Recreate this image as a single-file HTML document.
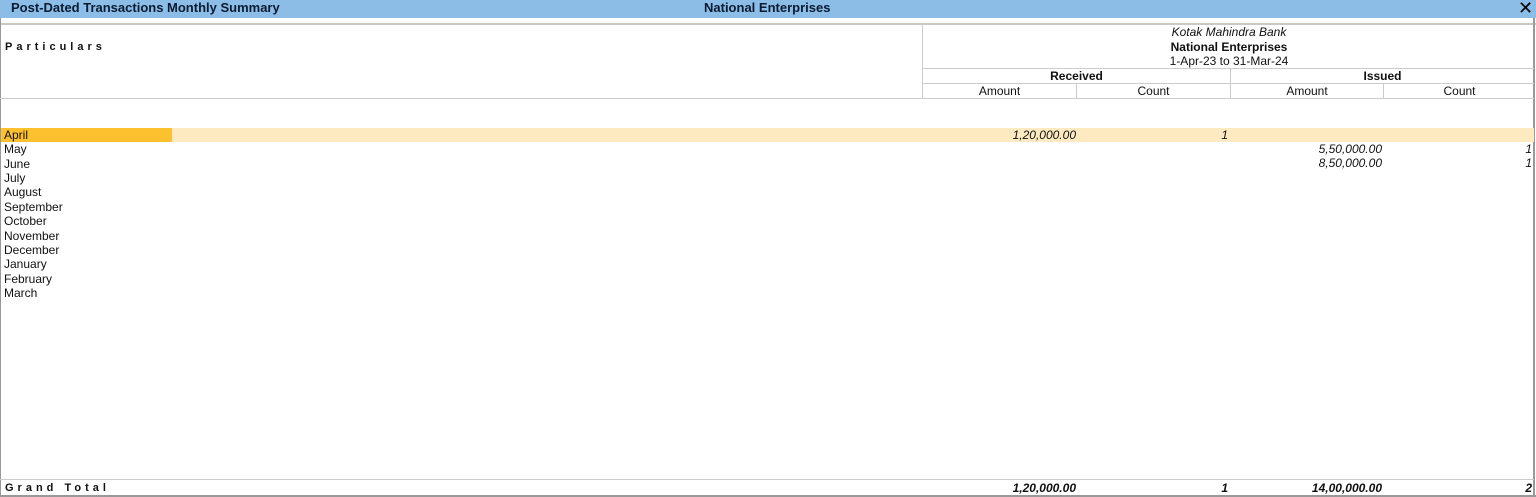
<!DOCTYPE html>
<html><head><style>
body{margin:0;width:1536px;height:497px;overflow:hidden;background:#fff;font-family:"Liberation Sans",Arial,sans-serif;font-size:12px;color:#111;position:relative}
div{position:absolute}
.t{white-space:nowrap;line-height:14px}
.r{text-align:right;font-style:italic}
</style></head><body>
<div style="left:0;top:0;width:1536px;height:18px;background:#8bbde6"></div>
<div class="t" style="left:11px;top:1px;font-weight:bold;font-size:13px;color:#0a1a33">Post-Dated Transactions Monthly Summary</div>
<div class="t" style="left:704px;top:1px;font-weight:bold;font-size:13px;color:#0a1a33">National Enterprises</div>
<div class="t" style="left:1518px;top:0px;font-size:18px;line-height:16px;color:#000">✕</div>
<div style="left:0;top:23px;width:1536px;height:2px;background:#c8c8c8"></div>
<div style="left:0;top:18px;width:1px;height:479px;background:#999"></div>
<div style="left:1533px;top:18px;width:2px;height:479px;background:#999"></div>
<div class="t" style="left:5px;top:40px;font-weight:bold;font-size:11px;letter-spacing:4px">Particulars</div>
<div style="left:922px;top:25px;width:1px;height:74px;background:#ccc"></div>
<div class="t" style="left:923px;top:25px;width:612px;text-align:center;font-style:italic">Kotak Mahindra Bank</div>
<div class="t" style="left:923px;top:40px;width:612px;text-align:center;font-weight:bold">National Enterprises</div>
<div class="t" style="left:923px;top:54px;width:612px;text-align:center">1-Apr-23 to 31-Mar-24</div>
<div style="left:922px;top:68px;width:612px;height:1px;background:#ccc"></div>
<div class="t" style="left:923px;top:69px;width:307px;text-align:center;font-weight:bold">Received</div>
<div class="t" style="left:1230px;top:69px;width:305px;text-align:center;font-weight:bold">Issued</div>
<div style="left:922px;top:83px;width:612px;height:1px;background:#ccc"></div>
<div style="left:1076px;top:83px;width:1px;height:15px;background:#ccc"></div>
<div style="left:1230px;top:69px;width:1px;height:29px;background:#ccc"></div>
<div style="left:1383px;top:83px;width:1px;height:15px;background:#ccc"></div>
<div class="t" style="left:923px;top:84px;width:153px;text-align:center">Amount</div>
<div class="t" style="left:1077px;top:84px;width:153px;text-align:center">Count</div>
<div class="t" style="left:1231px;top:84px;width:152px;text-align:center">Amount</div>
<div class="t" style="left:1384px;top:84px;width:151px;text-align:center">Count</div>
<div style="left:0;top:98px;width:1534px;height:1px;background:#ccc"></div>
<div style="left:1px;top:128px;width:1533px;height:14px;background:#fdeac0"></div>
<div style="left:1px;top:128px;width:171px;height:14px;background:#fdc12f"></div>
<div class="t" style="left:4px;top:128px;line-height:14.36px">April<br>May<br>June<br>July<br>August<br>September<br>October<br>November<br>December<br>January<br>February<br>March</div>
<div class="t r" style="left:900px;top:128px;width:176px">1,20,000.00</div>
<div class="t r" style="left:1100px;top:128px;width:128px">1</div>
<div class="t r" style="left:1200px;top:142px;width:182px;line-height:14.36px">5,50,000.00<br>8,50,000.00</div>
<div class="t r" style="left:1400px;top:142px;width:132px;line-height:14.36px">1<br>1</div>
<div style="left:0;top:479px;width:1534px;height:1px;background:#ccc"></div>
<div class="t" style="left:5px;top:481px;font-weight:bold;font-size:11px;letter-spacing:4px">Grand Total</div>
<div class="t r" style="left:900px;top:481px;width:176px;font-weight:bold">1,20,000.00</div>
<div class="t r" style="left:1100px;top:481px;width:128px;font-weight:bold">1</div>
<div class="t r" style="left:1200px;top:481px;width:182px;font-weight:bold">14,00,000.00</div>
<div class="t r" style="left:1400px;top:481px;width:132px;font-weight:bold">2</div>
<div style="left:0;top:495px;width:1536px;height:2px;background:#999"></div>
</body></html>
